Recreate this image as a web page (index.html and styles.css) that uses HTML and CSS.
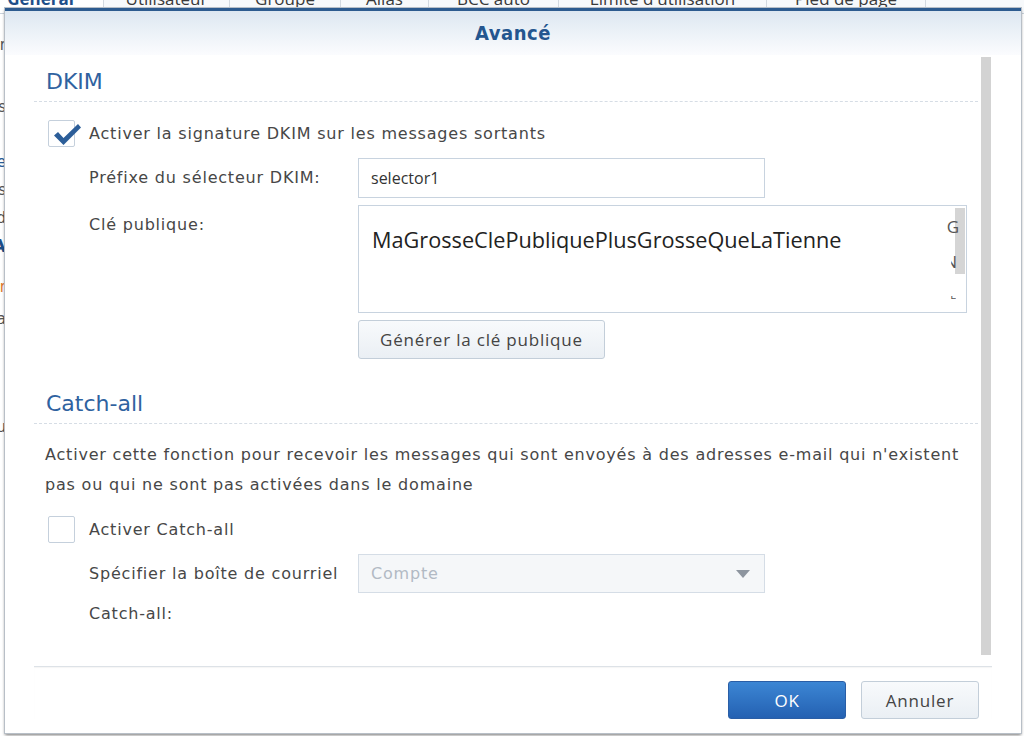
FILE: index.html
```html
<!DOCTYPE html>
<html lang="fr">
<head>
    <meta charset="UTF-8">
    <meta name="viewport" content="width=device-width, initial-scale=1.0">
    <title>Avancé</title>
    <link rel="stylesheet" href="styles.css">
</head>
<body>
    <!-- Page behind the dialog -->
    <div class="page">
        <div class="tabs">
            <div class="tab active">Général</div>
            <div class="tab">Utilisateur</div>
            <div class="tab">Groupe</div>
            <div class="tab">Alias</div>
            <div class="tab">BCC auto</div>
            <div class="tab">Limite d'utilisation</div>
            <div class="tab">Pied de page</div>
        </div>
        <div class="behind">
            <div class="frag f1">Serveur</div>
            <div class="frag f2">Paramètres</div>
            <div class="frag f3 blue">Modèle</div>
            <div class="frag f4">Ports</div>
            <div class="frag f5">Standard</div>
            <div class="frag f6 bold">SMTP-A</div>
            <div class="frag f7 orange">Serveur</div>
            <div class="frag f8">Fa</div>
            <div class="frag f9">Nouveau</div>
        </div>
    </div>

    <!-- Dialog -->
    <div class="dialog">
        <div class="dialog-head">Avancé</div>

        <div class="dialog-body">
            <div class="content">
                <!-- DKIM -->
                <h2 class="section-title">DKIM</h2>
                <div class="check-row">
                    <span class="checkbox">
                        <svg class="checkmark" viewBox="0 0 30 26" width="30" height="26">
                            <path d="M2 12.5 L6 9 L11.5 15 L26 1 L29 4.5 L11.5 22 Z" fill="#2c5e99"/>
                        </svg>
                    </span>
                    <span>Activer la signature DKIM sur les messages sortants</span>
                </div>

                <div class="field-row first">
                    <div class="field-label">Préfixe du sélecteur DKIM:</div>
                    <div class="text-input">selector1</div>
                </div>

                <div class="field-row">
                    <div class="field-label">Clé publique:</div>
                    <div class="key-box">
                        <div class="key-text">MaGrosseClePubliquePlusGrosseQueLaTienne</div>
                        <span class="key-scroll"></span>
                        <span class="peek p1">G</span>
                        <span class="peek p2">N</span>
                        <span class="peek p3">L</span>
                    </div>
                </div>

                <div class="field-row">
                    <div></div>
                    <div><button class="btn">Générer la clé publique</button></div>
                </div>

                <!-- Catch-all -->
                <h2 class="section-title catch">Catch-all</h2>
                <p class="desc">Activer cette fonction pour recevoir les messages qui sont envoyés à des adresses e-mail qui n'existent pas ou qui ne sont pas activées dans le domaine</p>

                <div class="check-row second">
                    <span class="checkbox"></span>
                    <span>Activer Catch-all</span>
                </div>

                <div class="field-row first">
                    <div class="field-label">Spécifier la boîte de courriel Catch-all:</div>
                    <div class="select-input">
                        <span>Compte</span>
                        <span class="arrow"></span>
                    </div>
                </div>
            </div>
            <div class="scrollbar"></div>
        </div>

        <div class="dialog-foot">
            <button class="btn btn-primary">OK</button>
            <button class="btn btn-wide">Annuler</button>
        </div>
    </div>
</body>
</html>
```

FILE: styles.css
```css
* {
    margin: 0;
    padding: 0;
    box-sizing: border-box;
}

body {
    width: 1024px;
    height: 736px;
    overflow: hidden;
    background-color: #ffffff;
    font-family: "DejaVu Sans", Verdana, sans-serif;
    color: #474747;
    position: relative;
}

/* ---- page behind ---- */

.tabs {
    display: flex;
    height: 30px;
    margin-top: -16px;
    margin-left: -22px;
    background-color: #f7f9fb;
    border-bottom: 1px solid #c9d2dc;
}

.tab {
    display: flex;
    align-items: center;
    justify-content: center;
    border-right: 1px solid #d3d9e0;
    font-family: "Open Sans", sans-serif;
    font-size: 17px;
    color: #3a3a3a;
    width: 118px;
}

.tab.active {
    width: 126px;
    color: #1e4f89;
    font-weight: bold;
    background-color: #ffffff;
}

.tab:nth-child(2) { width: 126px; }
.tab:nth-child(3) { width: 111px; }
.tab:nth-child(4) { width: 88px; }
.tab:nth-child(5) { width: 130px; }
.tab:nth-child(6) { width: 208px; }
.tab:nth-child(7) { width: 159px; }

.behind {
    width: 6px;
    overflow: hidden;
    display: flex;
    flex-direction: column;
    align-items: flex-end;
    font-size: 15px;
    color: #555;
}

.frag {
    white-space: nowrap;
    display: flex;
    justify-content: flex-end;
    width: 6px;
}

.f1 { margin-top: 22px; }
.f2 { margin-top: 44px; }
.f3 { margin-top: 37px; }
.f4 { margin-top: 10px; }
.f5 { margin-top: 10px; }
.f6 { margin-top: 8px; }
.f7 { margin-top: 22px; }
.f8 { margin-top: 14px; }
.f9 { margin-top: 90px; }

.frag.blue { color: #2a5d98; }
.frag.bold { color: #1e4f89; font-weight: bold; font-size: 18px; }
.frag.orange { color: #e07a2c; }

/* ---- dialog ---- */

.dialog {
    position: absolute;
    left: 5px;
    top: 8px;
    width: 1016px;
    height: 725px;
    background-color: #ffffff;
    border-top: 3px solid #2d5b8f;
    box-shadow: 0 0 0 1px #b8bfc7, 0 2px 3px rgba(0, 0, 0, 0.55);
    display: flex;
    flex-direction: column;
}

.dialog-head {
    height: 44px;
    display: flex;
    align-items: center;
    justify-content: center;
    background: linear-gradient(#dde7f1, #fbfcfe);
    font-family: "DejaVu Sans Condensed", "DejaVu Sans", sans-serif;
    font-weight: bold;
    font-size: 20px;
    letter-spacing: 0.5px;
    color: #24568f;
}

.dialog-body {
    height: 611px;
    display: flex;
}

.content {
    width: 944px;
    margin-left: 29px;
}

.scrollbar {
    width: 10px;
    margin: 2px 0 11px 3px;
    background-color: #d3d3d3;
}

.section-title {
    font-weight: normal;
    font-size: 22px;
    line-height: 28px;
    color: #2f62a0;
    padding: 0 12px 5px;
    margin-top: 13px;
    border-bottom: 1px dashed #d6dde5;
}

.section-title.catch {
    margin-top: 31px;
}

.check-row {
    display: flex;
    align-items: center;
    gap: 14px;
    margin-top: 18px;
    padding-left: 14px;
    font-size: 16px;
    letter-spacing: 0.8px;
    line-height: 27px;
}

.check-row.second {
    margin-top: 16px;
}

.checkbox {
    width: 27px;
    height: 27px;
    border: 1px solid #c5d0dc;
    border-radius: 2px;
    background-color: #ffffff;
    position: relative;
}

.checkmark {
    position: absolute;
    left: 3px;
    top: 2px;
}

.field-row {
    display: grid;
    grid-template-columns: 269px 1fr;
    padding-left: 55px;
    margin-top: 7px;
}

.field-row.first {
    margin-top: 11px;
}

.field-label {
    font-size: 16px;
    letter-spacing: 0.8px;
    line-height: 40px;
}

.text-input,
.select-input {
    width: 407px;
    height: 40px;
    border: 1px solid #c8d3df;
    padding: 0 12px;
    display: flex;
    align-items: center;
    font-family: "Open Sans", sans-serif;
    font-size: 16px;
    color: #333;
}

.select-input {
    height: 39px;
    justify-content: space-between;
    background-color: #f5f7f9;
    border-color: #d5dde6;
    font-family: "DejaVu Sans", sans-serif;
    letter-spacing: 0.8px;
    color: #b2bac4;
}

.arrow {
    width: 0;
    height: 0;
    border-left: 7px solid transparent;
    border-right: 7px solid transparent;
    border-top: 8px solid #8d959f;
    margin-right: 2px;
}

.key-box {
    width: 609px;
    height: 108px;
    border: 1px solid #c8d3df;
    position: relative;
    overflow: hidden;
}

.key-text {
    padding: 19px 13px;
    font-family: "Open Sans", sans-serif;
    font-size: 21.7px;
    color: #222;
}

.peek {
    position: absolute;
    font-family: "Open Sans", sans-serif;
    font-size: 17px;
    color: #555;
    line-height: 20px;
}

.p1 { top: 11px; right: 7px; }
.p2 { top: 46px; right: 9px; clip-path: inset(0 0 0 55%); }
.p3 { top: 79px; right: 10px; font-size: 11px; clip-path: inset(55% 0 0 0); }

.key-scroll {
    position: absolute;
    right: 1px;
    top: 2px;
    width: 10px;
    height: 66px;
    background-color: #d5d5d5;
}

.btn {
    height: 39px;
    padding: 0 21px;
    border: 1px solid #c3ced9;
    border-radius: 3px;
    background: linear-gradient(#f8fafc, #eaeff4);
    font-family: "Open Sans", sans-serif;
    font-size: 17px;
    letter-spacing: 0.8px;
    color: #444;
}

.desc {
    margin-top: 16px;
    padding-left: 11px;
    font-size: 16px;
    letter-spacing: 0.8px;
    line-height: 30px;
}

.dialog-foot {
    margin: 0 29px;
    border-top: 1px solid #dde2e7;
    box-shadow: inset 0 1px 1px rgba(0, 0, 0, 0.04);
    padding: 14px 13px 0 0;
    display: flex;
    justify-content: flex-end;
    gap: 15px;
}

.btn-primary,
.btn-wide {
    width: 118px;
    height: 38px;
    padding: 0;
}

.btn-primary {
    background: linear-gradient(#3c86d4, #2461b2);
    border-color: #2a5ea6;
    color: #ffffff;
}
```
